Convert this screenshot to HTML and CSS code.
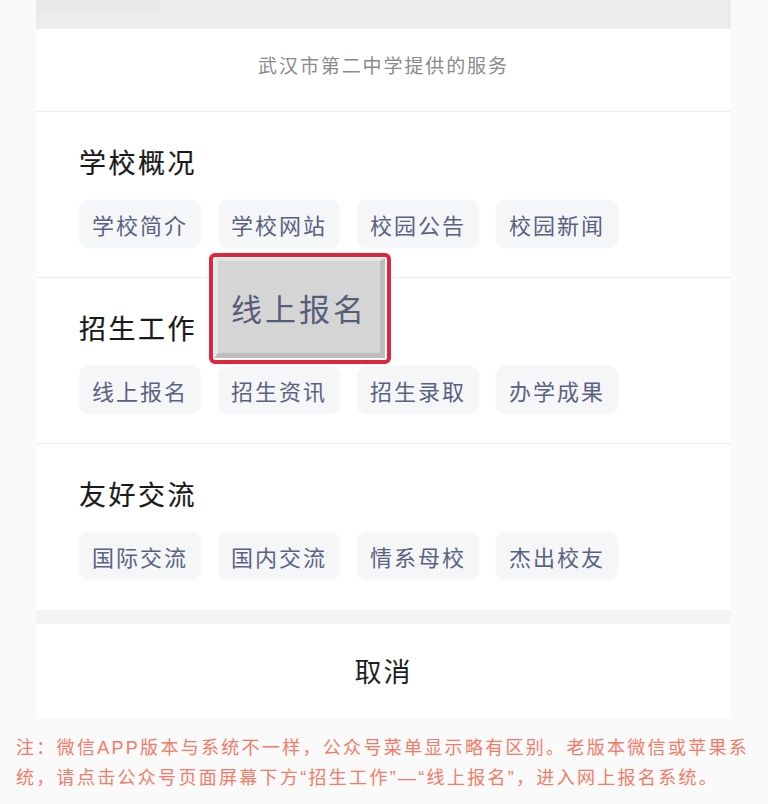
FILE: index.html
```html
<!DOCTYPE html>
<html lang="zh-CN">
<head>
    <meta charset="UTF-8">
    <title>武汉市第二中学</title>
    <link rel="stylesheet" href="styles.css">
</head>

<body>
<div class="page">
    <div class="topbar"><span class="tab"></span></div>

    <div class="sheet">
        <div class="sheet-head">武汉市第二中学提供的服务</div>

        <div class="group">
            <h3>学校概况</h3>
            <ul class="chips">
                <li>学校简介</li>
                <li>学校网站</li>
                <li>校园公告</li>
                <li>校园新闻</li>
            </ul>
        </div>

        <div class="group">
            <h3>招生工作</h3>
            <ul class="chips">
                <li>线上报名</li>
                <li>招生资讯</li>
                <li>招生录取</li>
                <li>办学成果</li>
            </ul>
        </div>

        <div class="group last">
            <h3>友好交流</h3>
            <ul class="chips">
                <li>国际交流</li>
                <li>国内交流</li>
                <li>情系母校</li>
                <li>杰出校友</li>
            </ul>
        </div>
    </div>

    <div class="gap"></div>
    <div class="cancel">取消</div>

    <!-- 放大的“线上报名”按钮 + 红框 -->
    <div class="callout">
        <div class="callout-btn">线上报名</div>
    </div>
</div>

<p class="note">注：微信APP版本与系统不一样，公众号菜单显示略有区别。老版本微信或苹果系统，请点击公众号页面屏幕下方“招生工作”—“线上报名”，进入网上报名系统。</p>
</body>
</html>
```

FILE: styles.css
```css
html, body {
    margin: 0;
    padding: 0;
    background: #fafafa;
}
body {
    font-family: "Noto Sans CJK SC", "Noto Sans", sans-serif;
}
.page {
    position: relative;
    width: 695px;
    margin-left: 36px;
}
.topbar {
    height: 29px;
    background: #ececec;
}
.topbar .tab {
    display: block;
    width: 123px;
    height: 13px;
    background: #e8e8e8;
}
.sheet {
    background: #fff;
}
.sheet-head {
    padding: 22px 0 32px;
    line-height: 28px;
    font-size: 19px;
    letter-spacing: 1.9px;
    color: #8a8a8a;
    text-align: center;
    border-bottom: 1px solid #ededed;
}
.group {
    padding: 36px 0 29px 43px;
    border-bottom: 1px solid #ededed;
}
.group.last {
    padding-bottom: 30px;
    border-bottom: 0;
}
.group h3 {
    margin: 0 0 24px;
    font-size: 27px;
    line-height: 28px;
    font-weight: normal;
    letter-spacing: 2.5px;
    color: #1a1a1a;
    -webkit-text-stroke: 0.2px #1a1a1a;
}
.chips {
    display: flex;
    gap: 17px;
    margin: 0;
    padding: 0;
    list-style: none;
}
.chips li {
    width: 122px;
    height: 48px;
    line-height: 48px;
    text-align: center;
    font-size: 22px;
    letter-spacing: 2px;
    color: #5a6282;
    background: #f5f6f8;
    border-radius: 10px;
    box-shadow: 0 0 3px #f5f6f8;
}
.gap {
    height: 14px;
    background: #f5f5f5;
}
.cancel {
    height: 94px;
    line-height: 94px;
    text-align: center;
    font-size: 27px;
    letter-spacing: 2px;
    color: #1e1e1e;
    background: #fff;
}
.callout {
    position: absolute;
    left: 173px;
    top: 253px;
    width: 182px;
    height: 111px;
    box-sizing: border-box;
    border: 4px solid #e2233d;
    border-radius: 6px;
    background: #fff;
    padding: 1px 2px 2px 1px;
}
.callout-btn {
    height: 100%;
    box-sizing: border-box;
    display: flex;
    align-items: center;
    justify-content: center;
    font-size: 31px;
    letter-spacing: 3px;
    color: #575d78;
    background: #d5d5d5;
    border-top: 3px solid #e2e2e2;
    border-left: 4px solid #e6e6e6;
    border-right: 5px solid #bcbcbc;
    border-bottom: 5px solid #bcbcbc;
}
.note {
    margin: 15px 0 0;
    padding: 0 4px 0 16px;
    font-family: "Liberation Sans", "Noto Sans CJK SC", sans-serif;
    font-size: 18px;
    line-height: 30px;
    letter-spacing: 2.3px;
    color: #f37a68;
}
```
